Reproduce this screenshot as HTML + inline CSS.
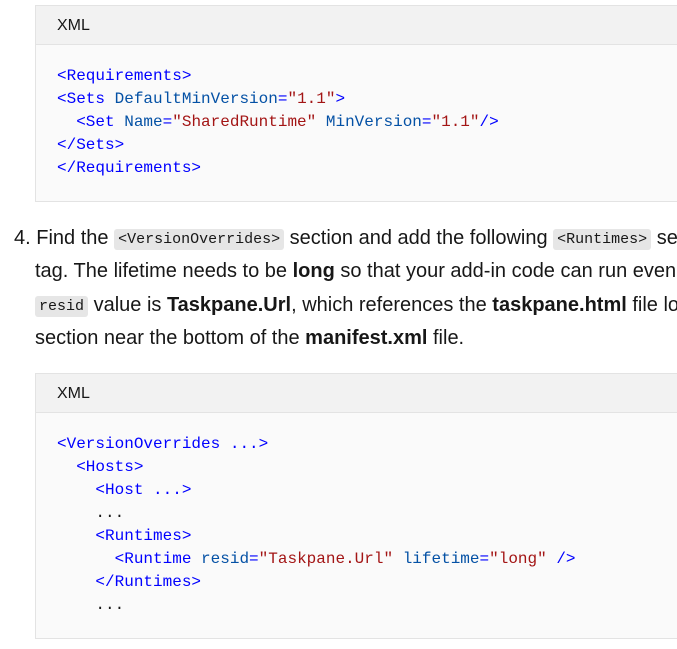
<!DOCTYPE html>
<html><head><meta charset="utf-8"><style>
body{margin:0;width:677px;height:649px;overflow:hidden;background:#fff;position:relative;font-family:"Liberation Sans",sans-serif;color:#171717}
.blk{position:absolute;left:35px;width:660px;border:1px solid #e3e3e3;background:#fafafa}
.hd{height:38px;background:#f2f2f2;border-bottom:1px solid #e3e3e3;font-size:16px;line-height:40px;padding-left:21px;color:#171717}
pre{margin:0;padding:20px 21px 0;font-family:"Liberation Mono",monospace;font-size:16px;line-height:23px;white-space:pre}
.t{color:#0000ff}.a{color:#0451a5}.v{color:#a31515}
.ln{position:absolute;left:35px;font-size:20px;white-space:nowrap;line-height:32px;height:32px}
code{font-family:"Liberation Mono",monospace;font-size:15px;background:#e6e6e6;border-radius:3px;padding:2px 4px;vertical-align:1px}
b{font-weight:bold}
</style></head><body>
<div class="blk" style="top:5px;height:195px">
<div class="hd">XML</div>
<pre><span class="t">&lt;Requirements&gt;</span>
<span class="t">&lt;Sets</span> <span class="a">DefaultMinVersion</span><span class="t">=</span><span class="v">"1.1"</span><span class="t">&gt;</span>
  <span class="t">&lt;Set</span> <span class="a">Name</span><span class="t">=</span><span class="v">"SharedRuntime"</span> <span class="a">MinVersion</span><span class="t">=</span><span class="v">"1.1"</span><span class="t">/&gt;</span>
<span class="t">&lt;/Sets&gt;</span>
<span class="t">&lt;/Requirements&gt;</span></pre>
</div>
<div class="ln" style="left:14px;top:222px">4. Find the <code>&lt;VersionOverrides&gt;</code> section and add the following <code>&lt;Runtimes&gt;</code> section</div>
<div class="ln" style="top:255px">tag. The lifetime needs to be <b>long</b> so that your add-in code can run even</div>
<div class="ln" style="top:289px"><code>resid</code> value is <b>Taskpane.Url</b>, which references the <b>taskpane.html</b> file location</div>
<div class="ln" style="top:322px">section near the bottom of the <b>manifest.xml</b> file.</div>
<div class="blk" style="top:373px;height:264px">
<div class="hd">XML</div>
<pre><span class="t">&lt;VersionOverrides</span> <span class="t">...&gt;</span>
  <span class="t">&lt;Hosts&gt;</span>
    <span class="t">&lt;Host</span> <span class="t">...&gt;</span>
    ...
    <span class="t">&lt;Runtimes&gt;</span>
      <span class="t">&lt;Runtime</span> <span class="a">resid</span><span class="t">=</span><span class="v">"Taskpane.Url"</span> <span class="a">lifetime</span><span class="t">=</span><span class="v">"long"</span> <span class="t">/&gt;</span>
    <span class="t">&lt;/Runtimes&gt;</span>
    ...</pre>
</div>
</body></html>
